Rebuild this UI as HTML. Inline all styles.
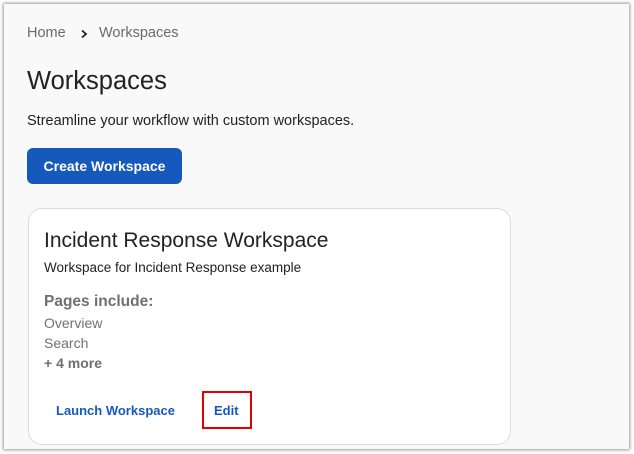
<!DOCTYPE html>
<html><head><style>
body{margin:0;width:634px;height:454px;overflow:hidden;background:#fff;font-family:"Liberation Sans","DejaVu Sans",sans-serif;}
.win{position:absolute;left:4px;top:4px;width:625px;height:445px;background:#f9f9f9;box-shadow:0 0 3px 1px #999;}
.abs{position:absolute;white-space:nowrap;}
</style></head><body>
<div class="win"></div>
<div class="abs" style="left:27px;top:25px;font-size:14.5px;color:#6b6b6b;">Home</div>
<svg class="abs" style="left:80px;top:29px" width="8" height="10"><path d="M2 1.5 L6 5 L2 8.5" stroke="#222" stroke-width="1.8" fill="none"/></svg>
<div class="abs" style="left:99px;top:25px;font-size:14.5px;color:#6b6b6b;">Workspaces</div>
<div class="abs" style="left:27px;top:67px;font-size:25.5px;color:#222;">Workspaces</div>
<div class="abs" style="left:27px;top:113px;font-size:14.5px;color:#222;">Streamline your workflow with custom workspaces.</div>
<div class="abs" style="left:27px;top:148px;width:155px;height:36px;background:#1659bd;border-radius:6px;color:#fff;font-size:14px;font-weight:bold;line-height:36px;text-align:center;">Create Workspace</div>
<div class="abs" style="left:28px;top:208px;width:481px;height:235px;background:#fff;border:1px solid #dcdcdc;border-radius:14px;"></div>
<div class="abs" style="left:44px;top:229px;font-size:21px;color:#222;">Incident Response Workspace</div>
<div class="abs" style="left:44px;top:260px;font-size:13.5px;color:#222;">Workspace for Incident Response example</div>
<div class="abs" style="left:44px;top:293px;font-size:15.5px;color:#707070;font-weight:bold;">Pages include:</div>
<div class="abs" style="left:44px;top:315px;font-size:14px;color:#707070;">Overview</div>
<div class="abs" style="left:44px;top:335px;font-size:14px;color:#707070;">Search</div>
<div class="abs" style="left:44px;top:355px;font-size:14px;color:#707070;font-weight:bold;">+ 4 more</div>
<div class="abs" style="left:56px;top:403px;font-size:13px;color:#1659bd;font-weight:bold;">Launch Workspace</div>
<div class="abs" style="left:202px;top:391px;width:46px;height:34px;border:2px solid #e00000;"></div>
<div class="abs" style="left:214px;top:403px;font-size:13px;color:#1659bd;font-weight:bold;">Edit</div>
</body></html>
